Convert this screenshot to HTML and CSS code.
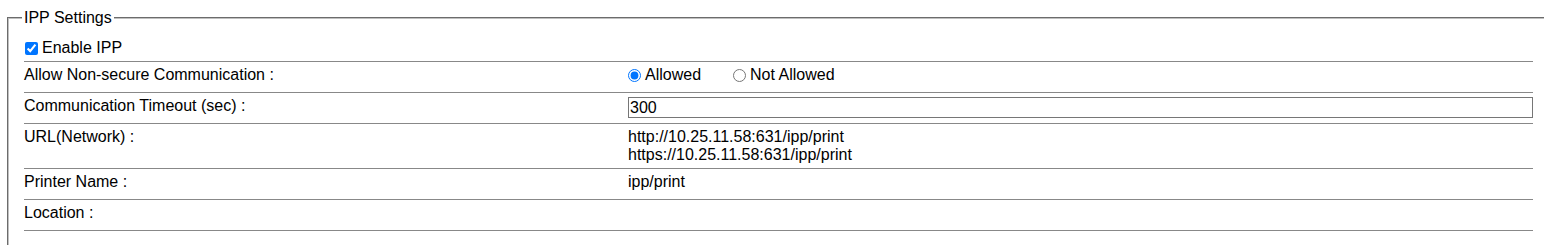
FILE: index.html
```html
<!DOCTYPE html>
<html>
<head>
	<title>IPP Settings</title>
	<meta charset="utf-8" />
	<link rel="stylesheet" href="styles.css">
</head>
<body>
<fieldset class="box">
	<legend>IPP Settings</legend>
	<div class="settings">
		<div class="enable"><input type="checkbox" id="ipp" checked /><label for="ipp">Enable IPP</label></div>
		<div class="row">
			<div class="name">Allow Non-secure Communication :</div>
			<div class="value radios">
				<label class="opt"><input type="radio" name="nonsecure" checked />Allowed</label>
				<label class="opt"><input type="radio" name="nonsecure" />Not Allowed</label>
			</div>
		</div>
		<div class="row">
			<div class="name">Communication Timeout (sec) :</div>
			<div class="value"><input type="text" class="field" value="300" /></div>
		</div>
		<div class="row">
			<div class="name">URL(Network) :</div>
			<div class="value">http://10.25.11.58:631/ipp/print<br />https://10.25.11.58:631/ipp/print</div>
		</div>
		<div class="row">
			<div class="name">Printer Name :</div>
			<div class="value">ipp/print</div>
		</div>
		<div class="row">
			<div class="name">Location :</div>
			<div class="value"></div>
		</div>
	</div>
</fieldset>
</body>
</html>
```

FILE: styles.css
```css
body {
  margin: 9px 0 0 0;
  font-family: "Liberation Sans", Arial, sans-serif;
  font-size: 16px;
  line-height: 18px;
  color: #000;
  overflow: hidden;
}

.box {
  margin: 0 0 0 7px;
  padding: 0 0 40px 15px;
  border: 2px groove #c0c0c0;
  border-right: none;
  min-width: 0;
}

.box legend {
  margin-left: -2px;
  padding: 0 2px;
}

.settings {
  width: 1509px;
}

/* checkbox line above the table rows */
.enable {
  display: flex;
  align-items: center;
  padding: 12px 0 4px 0;
  border-bottom: 1px solid #888;
}

.enable input {
  margin: 0 4px 0 1px;
  width: 13px;
  height: 13px;
}

.row {
  display: grid;
  grid-template-columns: 604px 1fr;
  min-height: 31px;
  box-sizing: border-box;
  padding: 4px 0 4px 0;
  border-bottom: 1px solid #888;
}

.radios {
  display: flex;
  align-items: flex-start;
}

.opt {
  display: flex;
  align-items: center;
  margin-right: 32px;
}

.opt input {
  margin: 0 4px 0 0;
  width: 13px;
  height: 13px;
}

.field {
  display: block;
  box-sizing: border-box;
  width: 100%;
  height: 21px;
  margin: 0;
  padding: 0 1px;
  border: 1px solid #767676;
  font-family: "Liberation Sans", Arial, sans-serif;
  font-size: 16px;
  color: #000;
}
```
